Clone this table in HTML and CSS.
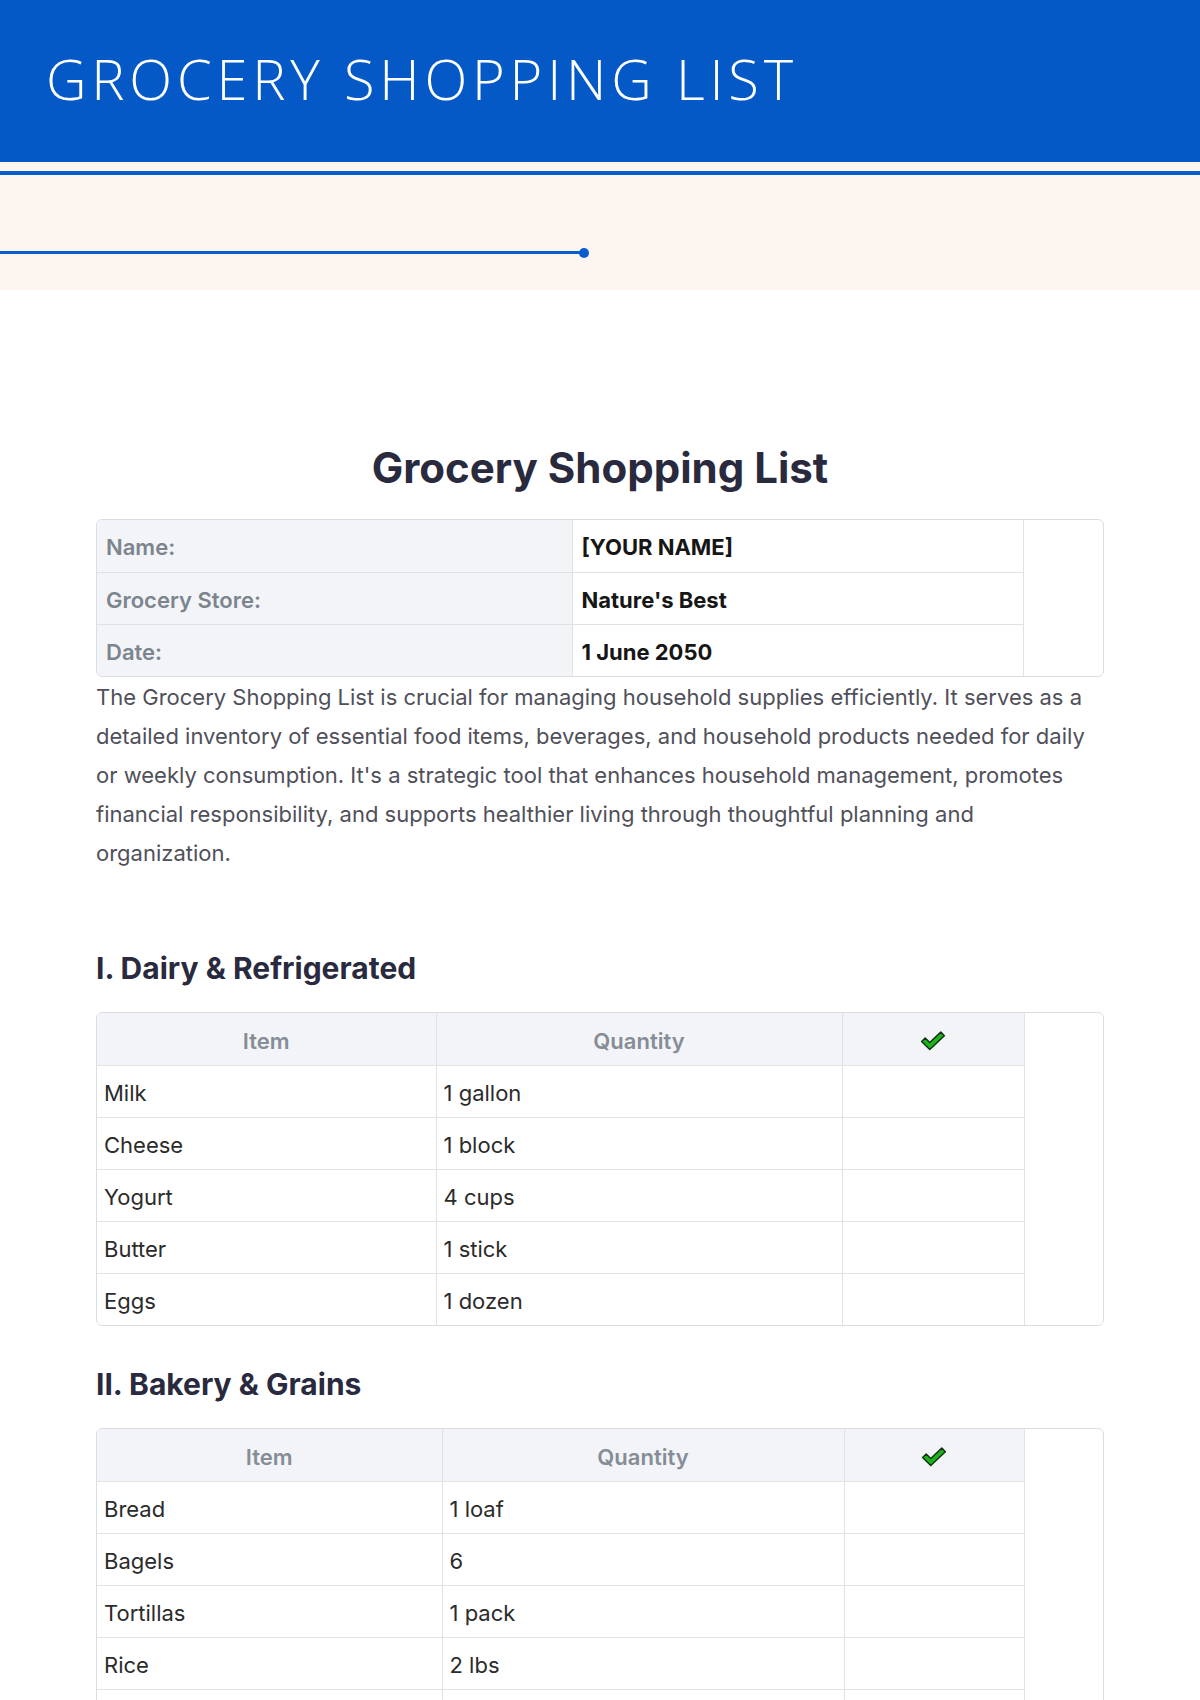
FILE: index.html
```html
<!DOCTYPE html>
<html lang="en">
<head>
<meta charset="utf-8">
<title>Grocery Shopping List</title>
<link rel="stylesheet" href="styles.css">
</head>
<body>
<header class="banner">
  <h1 class="banner-title">GROCERY SHOPPING LIST</h1>
</header>
<section class="band">
  <div class="band-rule"></div>
  <div class="band-line"><span class="band-dot"></span></div>
</section>

<main class="page">
  <h2 class="doc-title">Grocery Shopping List</h2>

  <div class="frame">
    <table class="info">
      <tr><th>Name:</th><td>[YOUR NAME]</td></tr>
      <tr><th>Grocery Store:</th><td>Nature's Best</td></tr>
      <tr><th>Date:</th><td>1 June 2050</td></tr>
    </table>
  </div>

  <p class="intro">The Grocery Shopping List is crucial for managing household supplies efficiently. It serves as a detailed inventory of essential food items, beverages, and household products needed for daily or weekly consumption. It's a strategic tool that enhances household management, promotes financial responsibility, and supports healthier living through thoughtful planning and organization.</p>

  <h3 class="section-title first">I. Dairy &amp; Refrigerated</h3>
  <div class="frame">
    <table class="list list-a">
      <colgroup><col class="c1"><col class="c2"><col class="c3"></colgroup>
      <tr>
        <th>Item</th><th>Quantity</th>
        <th><svg class="check" viewBox="0 0 24 18" width="26" height="20"><path d="M1.5 9.5 L4.8 6.2 L9 10.4 L19.2 0.8 L22.5 4.1 L9 16.8 Z" fill="#1db31d" stroke="#123312" stroke-width="1.4" stroke-linejoin="round"/></svg></th>
      </tr>
      <tr><td>Milk</td><td>1 gallon</td><td></td></tr>
      <tr><td>Cheese</td><td>1 block</td><td></td></tr>
      <tr><td>Yogurt</td><td>4 cups</td><td></td></tr>
      <tr><td>Butter</td><td>1 stick</td><td></td></tr>
      <tr><td>Eggs</td><td>1 dozen</td><td></td></tr>
    </table>
  </div>

  <h3 class="section-title">II. Bakery &amp; Grains</h3>
  <div class="frame">
    <table class="list list-b">
      <colgroup><col class="c1"><col class="c2"><col class="c3"></colgroup>
      <tr>
        <th>Item</th><th>Quantity</th>
        <th><svg class="check" viewBox="0 0 24 18" width="26" height="20"><path d="M1.5 9.5 L4.8 6.2 L9 10.4 L19.2 0.8 L22.5 4.1 L9 16.8 Z" fill="#1db31d" stroke="#123312" stroke-width="1.4" stroke-linejoin="round"/></svg></th>
      </tr>
      <tr><td>Bread</td><td>1 loaf</td><td></td></tr>
      <tr><td>Bagels</td><td>6</td><td></td></tr>
      <tr><td>Tortillas</td><td>1 pack</td><td></td></tr>
      <tr><td>Rice</td><td>2 lbs</td><td></td></tr>
      <tr><td></td><td></td><td></td></tr>
    </table>
  </div>
</main>
</body>
</html>
```
FILE: styles.css
```css
* { box-sizing: border-box; }
body {
  margin: 0;
  font-family: Inter, "Noto Sans", "Liberation Sans", sans-serif;
  background: #ffffff;
  color: #2b2b2b;
}
.banner {
  height: 162px;
  background: #0459c7;
  display: flex;
  align-items: center;
  padding: 0 0 6px 46px;
}
.banner-title {
  margin: 0;
  font-family: "Open Sans", "Liberation Sans", sans-serif;
  font-weight: 300;
  font-size: 56px;
  letter-spacing: 4.8px;
  color: #ffffff;
  line-height: 1;
}
.band {
  background: #fdf6f0;
  height: 128px;
  padding-top: 9px;
}
.band-rule {
  height: 4px;
  background: #0a5dcc;
}
.band-line {
  position: relative;
  margin-top: 76px;
  width: 584px;
  height: 3px;
  background: #0a5dcc;
}
.band-dot {
  position: absolute;
  right: -5px;
  top: -3.5px;
  width: 10px;
  height: 10px;
  border-radius: 50%;
  background: #0a5dcc;
}
.page {
  width: 1008px;
  margin: 0 auto;
  padding-top: 154px;
}
.doc-title {
  margin: 0 0 27px;
  text-align: center;
  font-size: 42px;
  line-height: 48px;
  font-weight: 700;
  color: #2a2a3e;
}
.frame {
  border: 1px solid #dcdde1;
  border-radius: 6px;
  overflow: hidden;
}
table {
  border-collapse: collapse;
  font-size: 22px;
}
.info { width: 927px; }
.info th, .info td {
  height: 52px;
  border: 1px solid #e1e2e5;
  text-align: left;
  padding: 3px 9px 0;
}
.info tr:first-child th, .info tr:first-child td { border-top: none; }
.info tr:last-child th, .info tr:last-child td { border-bottom: none; }
.info th {
  width: 475px;
  background: #f3f4f7;
  color: #7c858e;
  font-weight: 600;
  border-left: none;
}
.info td {
  font-weight: 700;
  color: #161616;
}
.intro {
  margin: 1px 0 0;
  font-size: 22px;
  line-height: 39px;
  color: #50505a;
}
.section-title {
  margin: 40px 0 26px;
  font-size: 30px;
  line-height: 36px;
  font-weight: 700;
  color: #2a2a3e;
}
.section-title.first { margin-top: 77px; }
.list th, .list td {
  height: 52px;
  border: 1px solid #e1e2e5;
  padding: 4px 7px 0;
}
.list tr:first-child th { border-top: none; }
.list tr:last-child td { border-bottom: none; }
.list th:first-child, .list td:first-child { border-left: none; }
.list th {
  background: #f3f4f7;
  color: #858d96;
  font-weight: 600;
  text-align: center;
}
.list td {
  color: #2b2b2b;
  font-weight: 400;
  text-align: left;
}
.list-a .c1 { width: 339px; }
.list-a .c2 { width: 406px; }
.list-a .c3 { width: 182px; }
.list-b .c1 { width: 345px; }
.list-b .c2 { width: 402px; }
.list-b .c3 { width: 180px; }
.list-a, .list-b { width: 927px; table-layout: fixed; }
.check { display: block; margin: 0 auto; }
```
